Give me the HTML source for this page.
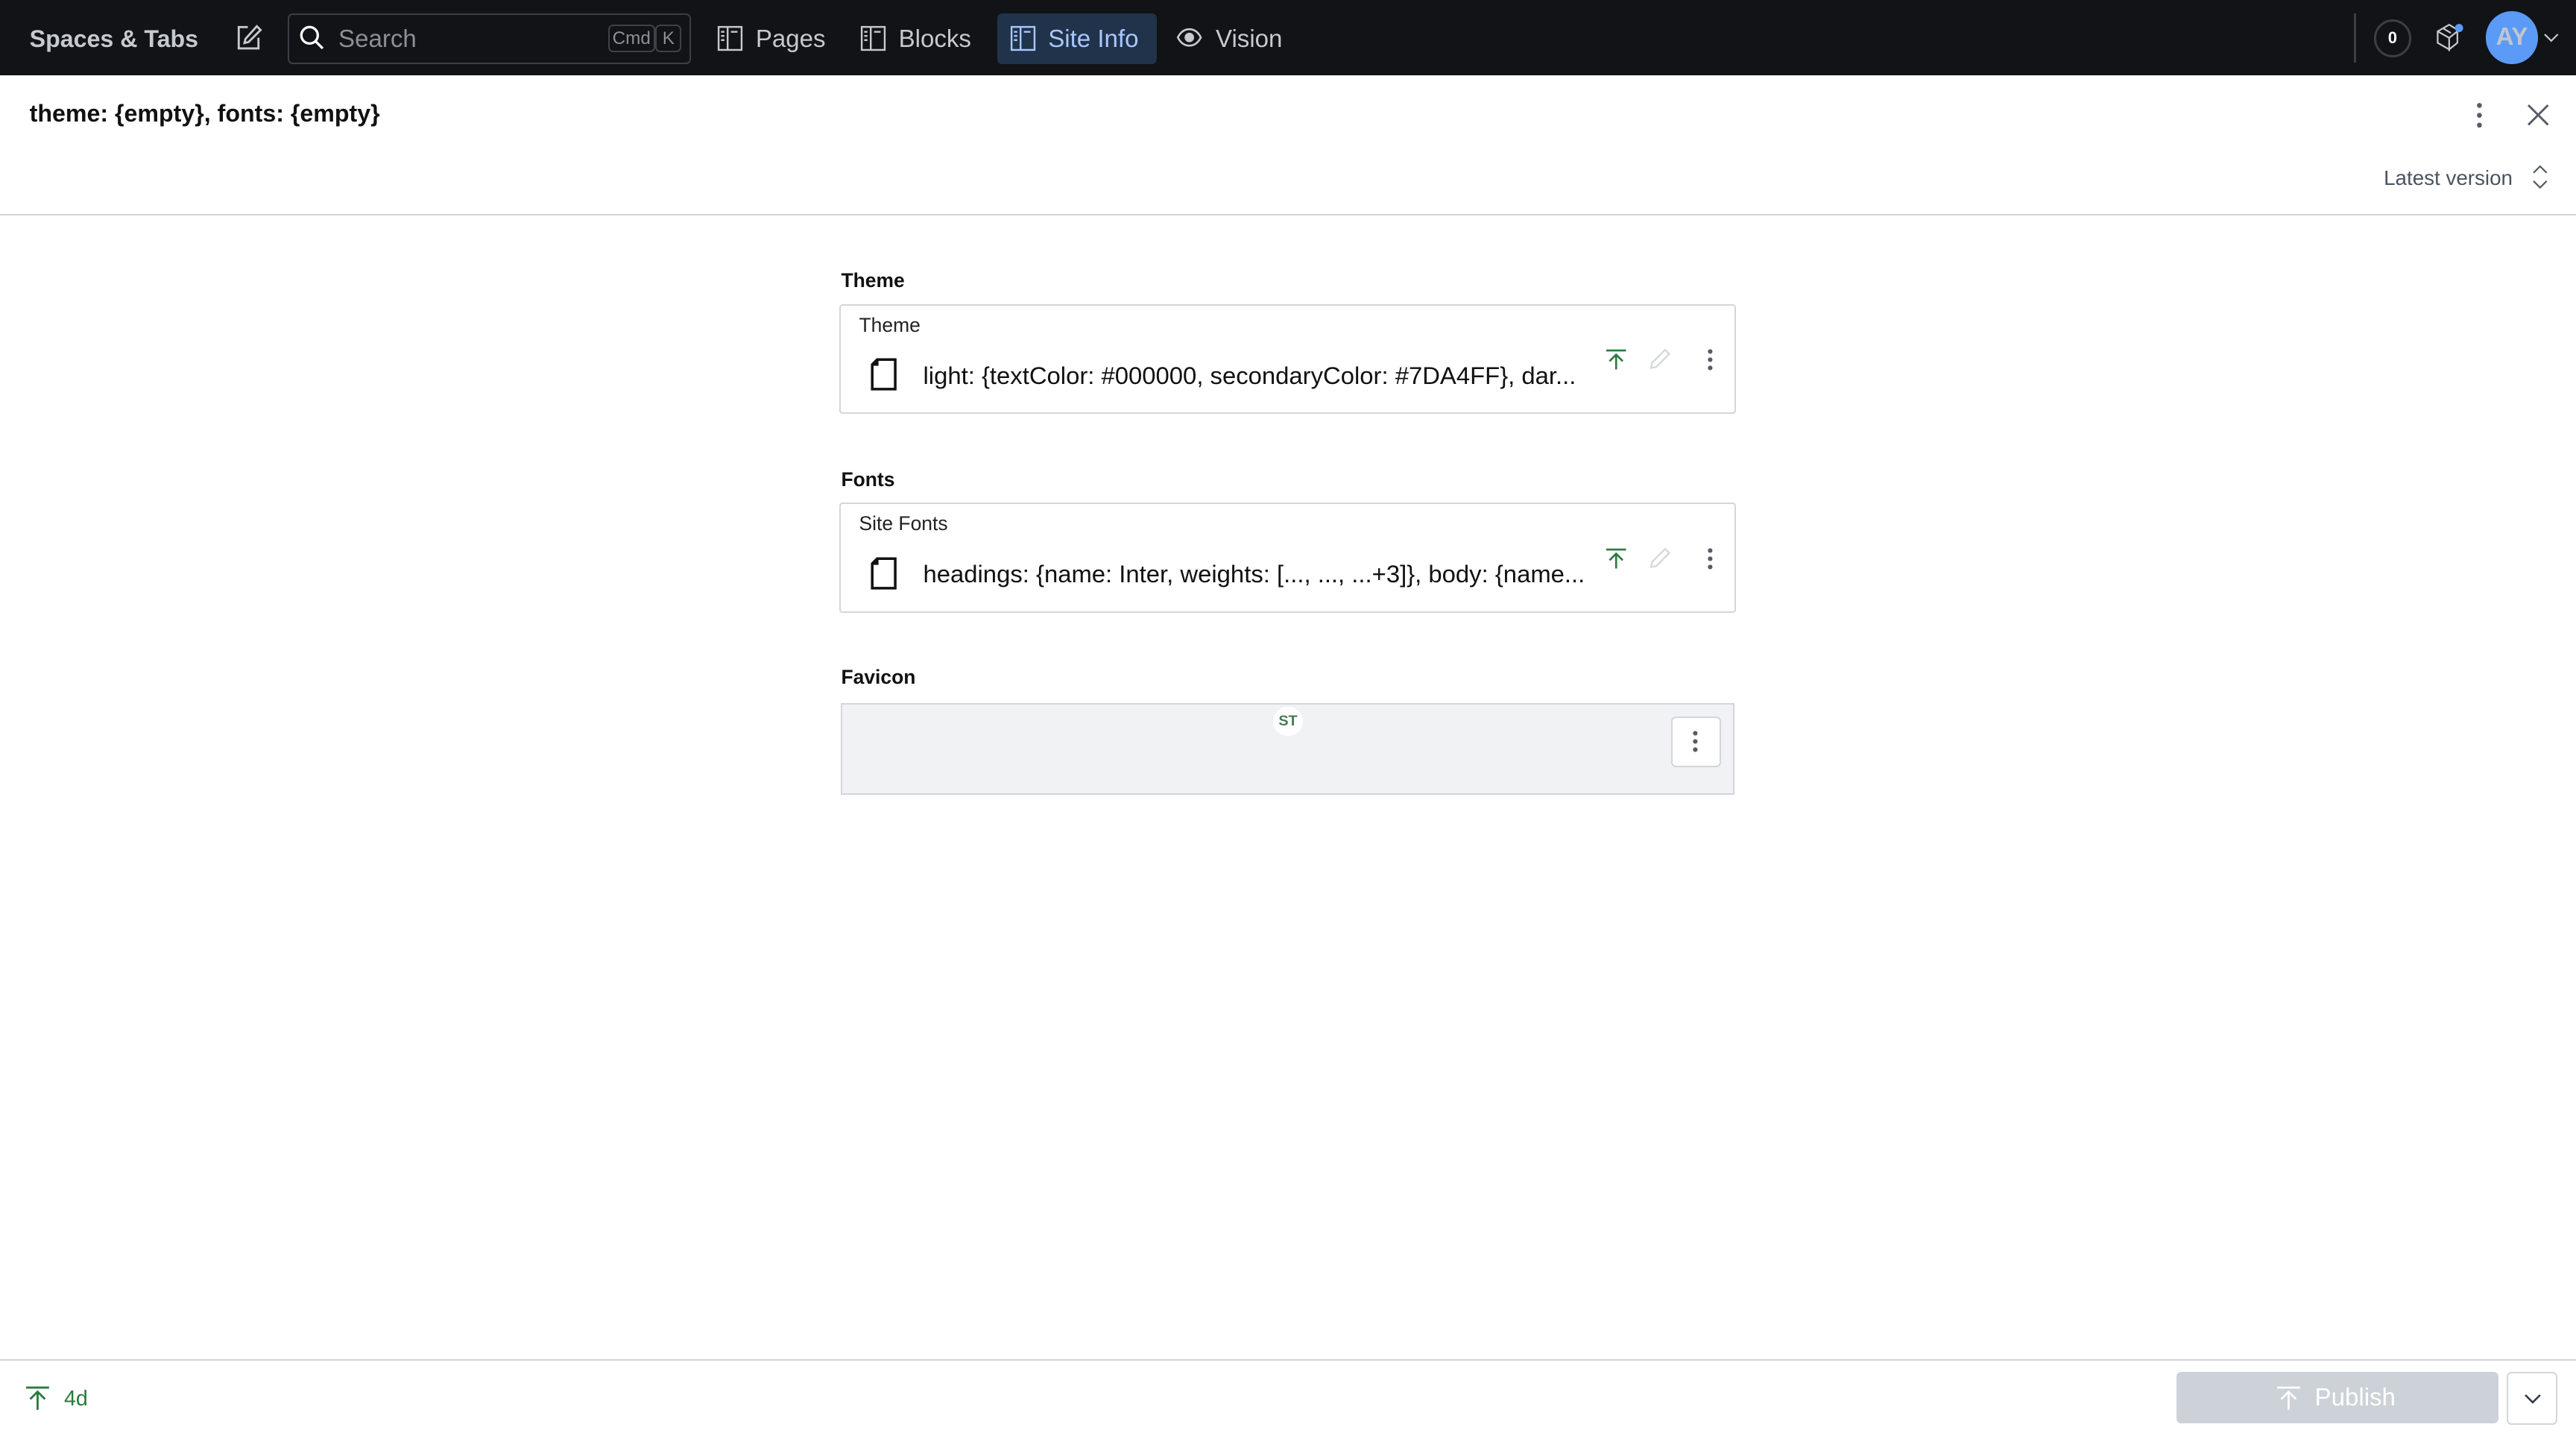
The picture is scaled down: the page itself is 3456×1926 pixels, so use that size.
<!DOCTYPE html>
<html><head><meta charset="utf-8">
<style>
html,body{margin:0;padding:0;background:#fff;overflow:hidden}
body{width:3456px;height:1926px}
#w{zoom:2.20408;width:1568px;height:874px;position:relative;font-family:"Liberation Sans",sans-serif;color:#111}
.a{position:absolute}
.nav{left:0;top:0;width:1568px;height:46px;background:#111316}
.nt{font-size:15px;color:#c5c9d0;line-height:46px;top:1px}
svg{position:absolute;overflow:visible}
.lbl{font-size:12px;font-weight:bold;left:512px}
.card{left:511px;width:544px;height:65px;border:1px solid #d3d6da;border-radius:2px;background:#fff}
.cap{font-size:12px;color:#222;left:11px;top:5px}
.val{font-size:14.9px;left:50px;top:34px;color:#111;white-space:nowrap}
</style></head><body><div id="w">
<div class="a nav"></div>
<div class="a nt" style="left:18px;font-weight:bold;font-size:14.6px">Spaces &amp; Tabs</div>
<svg style="left:144px;top:15px" width="16" height="16" viewBox="0 0 16 16" fill="none" stroke="#c5c9d0" stroke-width="1.3"><path d="M7 1.5H1.5v13h12V8"/><path d="M12.5 1 14.8 3.3 7.5 10.6 5 11.2 5.6 8.7Z"/></svg>
<div class="a" style="left:175px;top:8px;width:244px;height:29px;border:1px solid #3a3e45;border-radius:3px"></div>
<svg style="left:182px;top:15px" width="16" height="16" viewBox="0 0 16 16" fill="none" stroke="#fff" stroke-width="1.5"><circle cx="6.5" cy="6.5" r="5"/><path d="M10 10l4.5 4.5"/></svg>
<div class="a nt" style="left:206px;color:#8a8f98">Search</div>
<div class="a" style="left:370px;top:15px;width:27px;height:15px;border:1px solid #3d4148;border-radius:3px;font-size:11px;color:#8a8f98;text-align:center;line-height:15px">Cmd</div>
<div class="a" style="left:399px;top:15px;width:14px;height:15px;border:1px solid #3d4148;border-radius:3px;font-size:11px;color:#8a8f98;text-align:center;line-height:15px">K</div>
<svg style="left:437px;top:16px" width="15" height="15" viewBox="0 0 15 15" fill="none" stroke="#c5c9d0" stroke-width="1.1"><rect x=".5" y=".5" width="14" height="14"/><path d="M6 .5v14M2 3.5h2M2 6h2M2 8.5h2M8 3.5h4"/></svg>
<div class="a nt" style="left:460px">Pages</div>
<svg style="left:524px;top:16px" width="15" height="15" viewBox="0 0 15 15" fill="none" stroke="#c5c9d0" stroke-width="1.1"><rect x=".5" y=".5" width="14" height="14"/><path d="M6 .5v14M2 3.5h2M2 6h2M2 8.5h2M8 3.5h4"/></svg>
<div class="a nt" style="left:547px">Blocks</div>
<div class="a" style="left:607px;top:8px;width:97px;height:31px;background:#21324b;border-radius:3px"></div>
<svg style="left:615px;top:16px" width="15" height="15" viewBox="0 0 15 15" fill="none" stroke="#a8c8ff" stroke-width="1.1"><rect x=".5" y=".5" width="14" height="14"/><path d="M6 .5v14M2 3.5h2M2 6h2M2 8.5h2M8 3.5h4"/></svg>
<div class="a nt" style="left:638px;color:#a8c8ff">Site Info</div>
<svg style="left:716px;top:17px" width="16" height="12" viewBox="0 0 16 12" fill="none" stroke="#c5c9d0" stroke-width="1.2"><path d="M1 6C3 2 5.5 1 8 1s5 1 7 5c-2 4-4.5 5-7 5S3 10 1 6Z"/><circle cx="8" cy="6" r="2.3" fill="#c5c9d0"/></svg>
<div class="a nt" style="left:740px">Vision</div>
<div class="a" style="left:1433px;top:8px;width:1px;height:30px;background:#3a3e45"></div>
<div class="a" style="left:1445px;top:12px;width:20px;height:20px;border:1.5px solid #3a3e45;border-radius:50%;color:#fff;font-size:10px;font-weight:bold;text-align:center;line-height:20px">0</div>
<svg style="left:1482px;top:14px" width="18" height="18" viewBox="0 0 18 18" fill="none" stroke="#c5c9d0" stroke-width="1"><path d="M2 5l7-4 5 3v8l-5 4-7-4z M2 5l7 4 5-4 M9 9v8 M5 3l5 3"/><circle cx="15" cy="3" r="2.5" fill="#5b9bf7" stroke="none"/></svg>
<div class="a" style="left:1513px;top:7px;width:32px;height:32px;border-radius:50%;background:#5b9bf7;color:#c0c6cf;font-size:15px;font-weight:bold;text-align:center;line-height:32px">AY</div>
<svg style="left:1549px;top:21px" width="8" height="5" viewBox="0 0 8 5" fill="none" stroke="#c5c9d0" stroke-width="1"><path d="M0 0l4 4 4-4"/></svg>

<div class="a" style="left:18px;top:61px;font-size:14.6px;font-weight:bold">theme: {empty}, fonts: {empty}</div>
<svg style="left:1507px;top:62px" width="4" height="16"><circle cx="2" cy="2" r="1.5" fill="#555c66"/><circle cx="2" cy="8" r="1.5" fill="#555c66"/><circle cx="2" cy="14" r="1.5" fill="#555c66"/></svg>
<svg style="left:1539px;top:64px" width="12" height="12" stroke="#555c66" stroke-width="1.3"><path d="M0 0l12 12M12 0L0 12"/></svg>
<div class="a" style="left:1451px;top:101px;font-size:12.6px;color:#4a5360">Latest version</div>
<svg style="left:1542px;top:101px" width="8" height="13" fill="none" stroke="#555c66" stroke-width="1"><path d="M0 4l4-4 4 4M0 9l4 4 4-4"/></svg>
<div class="a" style="left:0;top:130px;width:1568px;height:1px;background:#d0d4d9"></div>

<div class="a lbl" style="top:164px">Theme</div>
<div class="a card" style="top:185px">
<div class="a cap">Theme</div>
<svg style="left:18px;top:32px" width="16" height="20" fill="none" stroke="#111" stroke-width="1.6"><path d="M4 1h11v18H1V4z M1 4h3V1"/></svg>
<div class="a val">light: {textColor: #000000, secondaryColor: #7DA4FF}, dar...</div>
<svg style="left:466px;top:27px" width="12" height="12" fill="none" stroke="#2a7a3e" stroke-width="1.2"><path d="M0 .5h12M6 12V3M2 7l4-4 4 4"/></svg>
<svg style="left:492px;top:26px" width="13" height="13" fill="none" stroke="#d5d8dc" stroke-width="1.1"><path d="M9.5 1l2.5 2.5L4 11.5 1 12l.5-3z"/></svg>
<svg style="left:527px;top:26px" width="4" height="14"><circle cx="2" cy="2" r="1.4" fill="#555c66"/><circle cx="2" cy="7" r="1.4" fill="#555c66"/><circle cx="2" cy="12" r="1.4" fill="#555c66"/></svg>
</div>

<div class="a lbl" style="top:285px">Fonts</div>
<div class="a card" style="top:306px">
<div class="a cap">Site Fonts</div>
<svg style="left:18px;top:32px" width="16" height="20" fill="none" stroke="#111" stroke-width="1.6"><path d="M4 1h11v18H1V4z M1 4h3V1"/></svg>
<div class="a val">headings: {name: Inter, weights: [..., ..., ...+3]}, body: {name...</div>
<svg style="left:466px;top:27px" width="12" height="12" fill="none" stroke="#2a7a3e" stroke-width="1.2"><path d="M0 .5h12M6 12V3M2 7l4-4 4 4"/></svg>
<svg style="left:492px;top:26px" width="13" height="13" fill="none" stroke="#d5d8dc" stroke-width="1.1"><path d="M9.5 1l2.5 2.5L4 11.5 1 12l.5-3z"/></svg>
<svg style="left:527px;top:26px" width="4" height="14"><circle cx="2" cy="2" r="1.4" fill="#555c66"/><circle cx="2" cy="7" r="1.4" fill="#555c66"/><circle cx="2" cy="12" r="1.4" fill="#555c66"/></svg>
</div>

<div class="a lbl" style="top:405px">Favicon</div>
<div class="a" style="left:512px;top:428px;width:542px;height:54px;background:#f1f2f4;border:1px solid #d3d6da"></div>
<div class="a" style="left:775px;top:430px;width:18px;height:18px;border-radius:50%;background:#fff;font-size:9px;color:#4a7a55;text-align:center;line-height:18px;font-weight:bold">ST</div>
<div class="a" style="left:1017px;top:436px;width:29px;height:29px;background:#fff;border:1px solid #d3d6da;border-radius:3px"></div>
<svg style="left:1030px;top:444px" width="4" height="14"><circle cx="2" cy="2" r="1.4" fill="#555c66"/><circle cx="2" cy="7" r="1.4" fill="#555c66"/><circle cx="2" cy="12" r="1.4" fill="#555c66"/></svg>

<div class="a" style="left:0;top:827px;width:1568px;height:1px;background:#d0d4d9"></div>
<svg style="left:16px;top:844px" width="14" height="14" fill="none" stroke="#2a7a3e" stroke-width="1.3"><path d="M0 .5h14M7 14V3M2.5 7.5 7 3l4.5 4.5"/></svg>
<div class="a" style="left:39px;top:844px;font-size:13px;color:#2a7a3e">4d</div>
<div class="a" style="left:1325px;top:835px;width:196px;height:31px;background:#cdd2d8;border-radius:3px"></div>
<svg style="left:1386px;top:844px" width="14" height="14" fill="none" stroke="#fff" stroke-width="1.2"><path d="M0 .5h14M7 14V3M2.5 7.5 7 3l4.5 4.5"/></svg>
<div class="a" style="left:1409px;top:842px;font-size:15px;color:#fff">Publish</div>
<div class="a" style="left:1526px;top:835px;width:29px;height:30px;border:1px solid #d3d6da;border-radius:3px;background:#fff"></div>
<svg style="left:1537px;top:849px" width="9" height="5" fill="none" stroke="#333a44" stroke-width="1.2"><path d="M0 0l4.5 4.5L9 0"/></svg>
</div></body></html>
